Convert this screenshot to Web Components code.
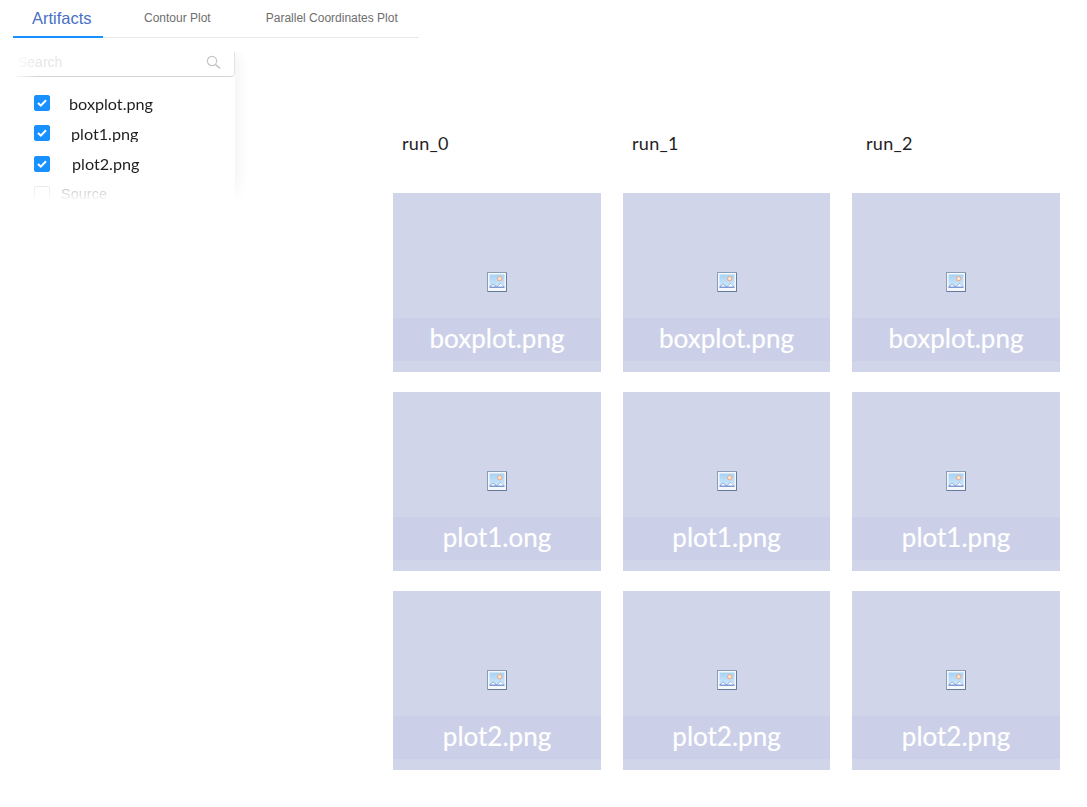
<!DOCTYPE html>
<html lang="en">
<head>
<meta charset="utf-8">
<title>Artifacts</title>
<style>
    html, body { margin: 0; background: #fff; }
    body { font-family: "Liberation Sans", Arial, sans-serif; }
</style>
</head>
<body>
<artifact-app></artifact-app>

<script>
// 데이터
const runs = [
    { name: 'run_0', indent: 9, files: ['boxplot.png', 'plot1.ong', 'plot2.png'] },
    { name: 'run_1', indent: 9, files: ['boxplot.png', 'plot1.png', 'plot2.png'] },
    { name: 'run_2', indent: 14, files: ['boxplot.png', 'plot1.png', 'plot2.png'] }
];

const checks = [
    { label: 'boxplot.png', checked: true, gap: 19, drop: 1 },
    { label: 'plot1.png', checked: true, gap: 21, drop: 0.5, clip: true },
    { label: 'plot2.png', checked: true, gap: 22, drop: 0 },
    { label: 'Source', checked: false, gap: 11, drop: 0 }
];

class TabBar extends HTMLElement {
    constructor() {
        super();
        this.attachShadow({ mode: 'open' });
        this.shadowRoot.innerHTML = `
            <style>
                :host {
                    display: flex;
                    width: 406px;
                    height: 38px;
                    margin-left: 13px;
                    box-sizing: border-box;
                    border-bottom: 1px solid #e8e8e8;
                    font-family: "Liberation Sans", Arial, sans-serif;
                }
                .tab {
                    padding: 0 19px;
                    font-size: 12px;
                    line-height: 37px;
                    color: #6e6e6e;
                    white-space: nowrap;
                }
                .tab + .tab { margin-left: 22px; }
                .tab + .tab + .tab { margin-left: 17px; }
                .active {
                    width: 90px;
                    height: 38px;
                    padding: 0 0 0 19px;
                    box-sizing: border-box;
                    border-bottom: 2px solid #1890ff;
                    font-size: 16.5px;
                    color: #4a70c4;
                }
            </style>
            <div class="tab active">Artifacts</div>
            <div class="tab">Contour Plot</div>
            <div class="tab">Parallel Coordinates Plot</div>
        `;
    }
}
customElements.define('tab-bar', TabBar);

class CheckRow extends HTMLElement {
    constructor() {
        super();
        this.attachShadow({ mode: 'open' });
    }

    connectedCallback() {
        const checked = this.hasAttribute('checked');
        const gap = this.getAttribute('gap') || 19;
        const drop = this.getAttribute('drop') || 0;
        this.shadowRoot.innerHTML = `
            <style>
                :host {
                    display: flex;
                    align-items: center;
                    height: 30.5px;
                    padding-left: 21px;
                    font-family: Lato, "Open Sans", sans-serif;
                    font-size: 16.2px;
                    color: #1f1f1f;
                }
                .box {
                    flex: none;
                    display: flex;
                    align-items: center;
                    justify-content: center;
                    width: 16px;
                    height: 16px;
                    margin-right: ${gap}px;
                    box-sizing: border-box;
                    border-radius: 2px;
                    border: 1px solid #d9d9d9;
                    background: #fff;
                }
                .label { padding-top: ${drop * 2}px; }
                :host([checked]) .box { background: #1890ff; border-color: #1890ff; }
                :host(:not([checked])) { color: #8c8c8c; font-family: "Liberation Sans", Arial, sans-serif; font-size: 14.5px; }
                :host([clip]) .label { height: 17px; overflow: hidden; line-height: 18px; }
                svg { display: block; }
            </style>
            <span class="box">${checked ? '<svg width="10" height="8" viewBox="0 0 10 8"><path d="M1 4l2.8 2.6L9 1.2" fill="none" stroke="#fff" stroke-width="2"/></svg>' : ''}</span>
            <span class="label"><slot></slot></span>
        `;
    }
}
customElements.define('check-row', CheckRow);

class ArtifactSidebar extends HTMLElement {
    constructor() {
        super();
        this.attachShadow({ mode: 'open' });
        this.shadowRoot.innerHTML = `
            <style>
                :host {
                    display: block;
                    flex: none;
                    width: 236px;
                    height: 153px;
                    margin: 14px 0 0 13px;
                    overflow: hidden;
                    -webkit-mask-image: linear-gradient(#000 122px, transparent 150px);
                    mask-image: linear-gradient(#000 122px, transparent 150px);
                }
                .panel {
                    width: 222px;
                    height: 170px;
                    background: #fff;
                    box-shadow: 6px 0 14px -3px rgba(0, 0, 0, 0.06);
                }
                .search {
                    display: flex;
                    align-items: center;
                    justify-content: space-between;
                    height: 25px;
                    box-sizing: border-box;
                    padding: 0 13px 4px 5px;
                    border-bottom: 1px solid #d4d4d4;
                    border-right: 1px solid #e4e4e4;
                    border-bottom-right-radius: 4px;
                    font-family: "Liberation Sans", Arial, sans-serif;
                    font-size: 14px;
                    color: #e6e6e6;
                    -webkit-mask-image: linear-gradient(90deg, transparent 0, #000 24px);
                    mask-image: linear-gradient(90deg, transparent 0, #000 24px);
                }
                .list { padding-top: 10.5px; }
                svg { display: block; }
            </style>
            <div class="panel">
                <div class="search">
                    <span>Search</span>
                    <svg width="15" height="15" viewBox="0 0 15 15" fill="none" stroke="#c4c4c4">
                        <circle cx="6" cy="6" r="4.6" stroke-width="1.2"/>
                        <path d="M9.5 9.5l4.5 4" stroke-width="1.6"/>
                    </svg>
                </div>
                <div class="list"><slot></slot></div>
            </div>
        `;
    }
}
customElements.define('artifact-sidebar', ArtifactSidebar);

class MissingImage extends HTMLElement {
    constructor() {
        super();
        this.attachShadow({ mode: 'open' });
        this.shadowRoot.innerHTML = `
            <style>
                :host { display: block; width: 20px; height: 20px; }
                svg { display: block; }
            </style>
            <svg width="20" height="20" viewBox="0 0 20 20">
                <defs>
                    <linearGradient id="sky" x1="0" y1="0" x2="0" y2="1">
                        <stop offset="0" stop-color="#a6d2f5"/>
                        <stop offset="1" stop-color="#d3eafb"/>
                    </linearGradient>
                </defs>
                <rect x="0.5" y="0.5" width="19" height="19" fill="#f5f7fa" stroke="#8a9db6"/>
                <rect x="2.5" y="2.5" width="15" height="13.5" fill="url(#sky)"/>
                <circle cx="12.7" cy="6.7" r="2.2" fill="#fde6d2" stroke="#f3a47f"/>
                <path d="M2.5 16v-1.4l3.5-3.2 2.8 2.4 1 .8 3.4-3.4 4.3 3.6V16z" fill="#7f9cd6"/>
                <path d="M3.6 14.6L6 12.3l2.6 2.3zM10.4 14.6l3.2-2.9 3 2.9z" fill="#fff"/>
                <path d="M19.5 1v18.5H1" fill="none" stroke="#647b9a"/>
            </svg>
        `;
    }
}
customElements.define('missing-image', MissingImage);

class ArtifactTile extends HTMLElement {
    constructor() {
        super();
        this.attachShadow({ mode: 'open' });
        this.shadowRoot.innerHTML = `
            <style>
                :host {
                    position: relative;
                    display: flex;
                    align-items: center;
                    justify-content: center;
                    height: 179px;
                    box-sizing: border-box;
                    padding-bottom: 2px;
                    background: #d0d5ea;
                }
                .caption {
                    position: absolute;
                    left: 0;
                    right: 0;
                    bottom: 11px;
                    height: 43px;
                    background: #cbd0e8;
                    color: #fff;
                    font-family: Lato, "Open Sans", sans-serif;
                    font-size: 26px;
                    line-height: 41px;
                    text-align: center;
                    -webkit-text-stroke: 0.2px #fff;
                }
            </style>
            <missing-image></missing-image>
            <div class="caption"><slot></slot></div>
        `;
    }
}
customElements.define('artifact-tile', ArtifactTile);

class RunGrid extends HTMLElement {
    constructor() {
        super();
        this.attachShadow({ mode: 'open' });
    }

    connectedCallback() {
        const heads = runs.map(r => `<div class="head" style="padding-left:${r.indent}px">${r.name}</div>`).join('');
        // 행 단위로 타일 배치
        const tiles = [0, 1, 2].map(i =>
            runs.map(r => `<artifact-tile>${r.files[i]}</artifact-tile>`).join('')
        ).join('');
        this.shadowRoot.innerHTML = `
            <style>
                :host {
                    display: grid;
                    grid-template-columns: 208px 207px 208px;
                    column-gap: 22px;
                    row-gap: 20px;
                    align-content: start;
                    padding: 91px 0 0 144px;
                    font-family: Lato, "Open Sans", sans-serif;
                }
                .head {
                    height: 30px;
                    margin-bottom: 14px;
                    font-size: 18px;
                    letter-spacing: 0.3px;
                    line-height: 28px;
                    color: #1f1f1f;
                }
            </style>
            ${heads}
            ${tiles}
        `;
    }
}
customElements.define('run-grid', RunGrid);

class ArtifactApp extends HTMLElement {
    constructor() {
        super();
        this.attachShadow({ mode: 'open' });
    }

    connectedCallback() {
        const rows = checks.map(c =>
            `<check-row gap="${c.gap}" drop="${c.drop}"${c.checked ? ' checked' : ''}${c.clip ? ' clip' : ''}>${c.label}</check-row>`
        ).join('');
        this.shadowRoot.innerHTML = `
            <style>
                :host { display: block; }
                .content { display: flex; align-items: flex-start; }
            </style>
            <tab-bar></tab-bar>
            <div class="content">
                <artifact-sidebar>${rows}</artifact-sidebar>
                <run-grid></run-grid>
            </div>
        `;
    }
}
customElements.define('artifact-app', ArtifactApp);
</script>
</body>
</html>
